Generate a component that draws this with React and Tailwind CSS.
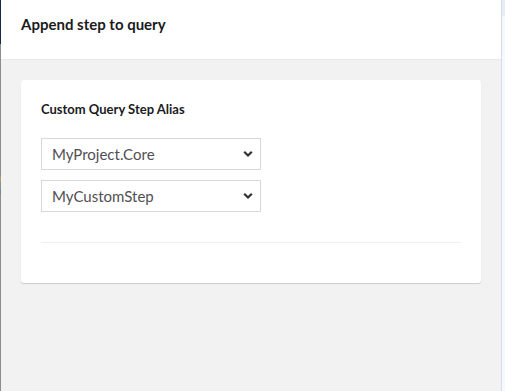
import { useState } from "react";

const Chevron = () => (
  <svg
    className="pointer-events-none absolute right-[8px] top-1/2 -translate-y-1/2"
    width="10"
    height="7"
    viewBox="0 0 10 7"
  >
    <path d="M1.2 1.3 L5 5 L8.8 1.3" fill="none" stroke="#303033" strokeWidth="2.2" />
  </svg>
);

const SelectBox = ({ value, options, onChange }) => (
  <div className="relative w-[220px]">
    <select
      value={value}
      onChange={(e) => onChange(e.target.value)}
      className="w-full h-[32px] appearance-none border border-[#d8d7d9] bg-white pl-[10px] pr-[28px] text-[15px] text-[#515054] outline-none"
    >
      {options.map((o) => (
        <option key={o}>{o}</option>
      ))}
    </select>
    <Chevron />
  </div>
);

export default function App() {
  const [project, setProject] = useState("MyProject.Core");
  const [step, setStep] = useState("MyCustomStep");

  return (
    <div
      className="flex w-[505px] h-[391px] overflow-hidden bg-[#f3f2f3]"
      style={{ fontFamily: "Lato, 'Open Sans', sans-serif" }}
    >
      {/* edge of the page behind the panel */}
      <div className="w-px flex flex-col shrink-0">
        <div className="h-[44px] bg-[#1b264f]" />
        <div className="h-[132px] bg-[#8d8d8f]" />
        <div className="h-[6px] bg-[#b09a6a]" />
        <div className="h-[8px] bg-[#8d8d8f]" />
        <div className="h-[4px] bg-[#6f8a90]" />
        <div className="flex-1 bg-[#8d8d8f]" />
      </div>

      <div className="w-[500px] shrink-0 flex flex-col">
        <div className="h-[60px] bg-white border-b border-[#e9e9eb] px-[20px] pt-[14px]">
          <h1 className="text-[15px] leading-[20px] font-bold text-[#1b1b1d]">
            Append step to query
          </h1>
        </div>
        <div className="flex-1 bg-[#f3f2f3] p-[20px]">
          <div className="bg-white rounded-[3px] shadow-[0_1px_1px_rgba(0,0,0,0.16)] px-[20px] pt-[20px] pb-[40px]">
            <p className="text-[13px] leading-[18px] font-bold text-[#1b1b1d]">
              Custom Query Step Alias
            </p>
            <div className="mt-[20px] flex flex-col gap-[10px]">
              <SelectBox
                value={project}
                options={["MyProject.Core", "MyProject.Web"]}
                onChange={setProject}
              />
              <SelectBox
                value={step}
                options={["MyCustomStep", "MyOtherStep"]}
                onChange={setStep}
              />
            </div>
            <hr className="mt-[30px] border-[#f0eff1]" />
          </div>
        </div>
      </div>

      <div className="flex-1 flex flex-col border-l border-[#d6ddf0]">
        <div className="h-[16px] bg-[#e8ecf7]" />
        <div className="flex-1 bg-[#f7f8fc]" />
      </div>
    </div>
  );
}
